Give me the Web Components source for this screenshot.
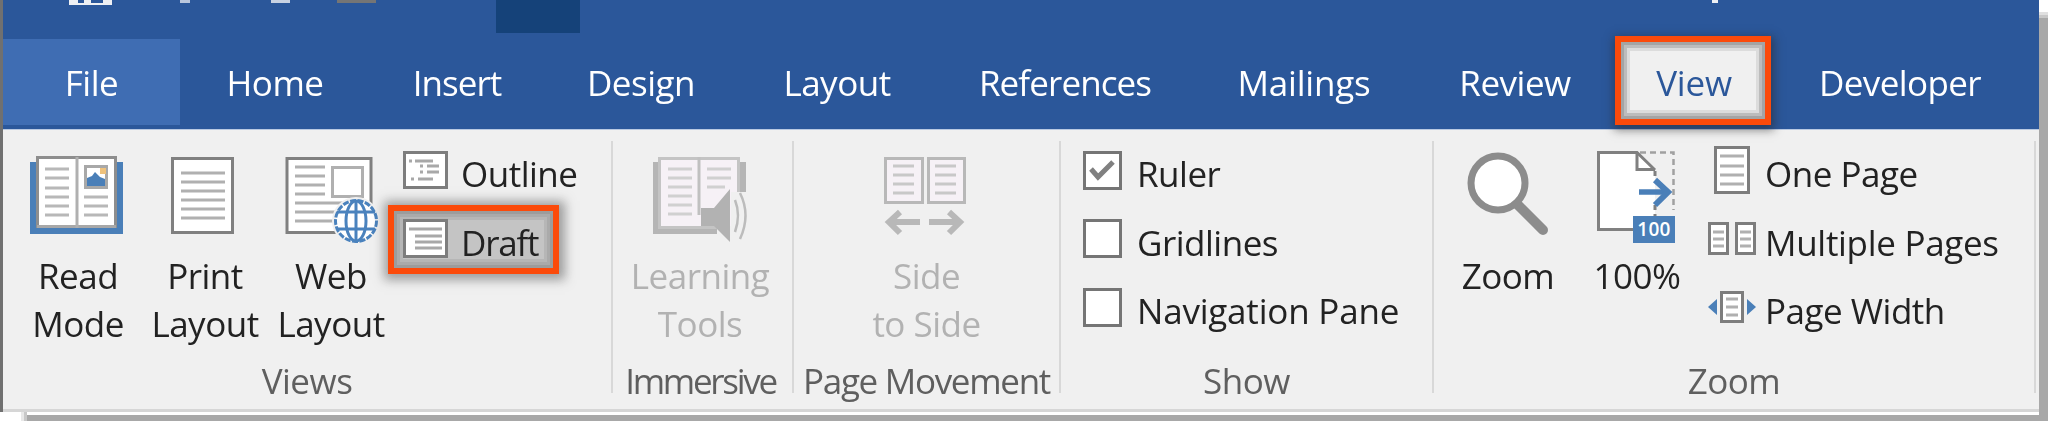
<!DOCTYPE html>
<html><head><meta charset="utf-8"><title>Word ribbon</title>
<style>
html,body{margin:0;padding:0;background:#a8a8a8}
body{font-family:"Open Sans","Liberation Sans",sans-serif;font-size:35px;letter-spacing:-.5px;width:2048px;height:421px;overflow:hidden}
</style></head><body>
<word-page>
  <title-strip></title-strip>
  <tab-row>
    <ribbon-tab file style="width:177px">File</ribbon-tab>
    <ribbon-tab style="width:190px">Home</ribbon-tab>
    <ribbon-tab style="width:174px;letter-spacing:-1px">Insert</ribbon-tab>
    <ribbon-tab style="width:194px">Design</ribbon-tab>
    <ribbon-tab style="width:198px">Layout</ribbon-tab>
    <ribbon-tab style="width:258px;letter-spacing:-.9px">References</ribbon-tab>
    <ribbon-tab style="width:220px;letter-spacing:-.2px">Mailings</ribbon-tab>
    <ribbon-tab style="width:202px">Review</ribbon-tab>
    <ribbon-tab marked style="width:156px;letter-spacing:-.2px">View</ribbon-tab>
    <ribbon-tab style="width:256px;letter-spacing:-.6px">Developer</ribbon-tab>
  </tab-row>
  <ribbon-body>
    <ribbon-group label="Views" style="width:610px;--pad:5px">
      <big-button style="width:140px"><svg slot="icon" width="140" height="109" viewBox="8 141 140 109">
        <rect x="30" y="162" width="93" height="72" fill="#4a7fb8"/>
        <rect x="37.5" y="157.5" width="78" height="69" fill="#fff" stroke="#8e8e8e" stroke-width="3"/>
        <path d="M37 226.5H116" stroke="#a8a8a8" stroke-width="3"/>
        <path d="M77 157V228" stroke="#b0b0b0" stroke-width="3"/>
        <path d="M45 169H69M45 178H69M45 188H69M45 197H69M45 206H69M45 215H69M84 197H108M84 206H108M84 215H108" stroke="#b8b8b8" stroke-width="3"/>
        <rect x="85.5" y="166.5" width="21" height="21" fill="#fff" stroke="#a8a8a8" stroke-width="3"/>
        <path d="M87 186V178L92 176L95 172L100 177L105 179V186Z" fill="#4a7fb8"/>
        <rect x="100" y="168" width="6" height="6" fill="#efc27c"/>
      </svg>Read<br>Mode</big-button>
      <big-button style="width:114px"><svg slot="icon" width="114" height="109" viewBox="148 141 114 109">
        <rect x="172.5" y="158.5" width="60" height="74" fill="#fff" stroke="#808080" stroke-width="3"/>
        <path d="M181 173H225M181 182H225M181 191H225M181 200H225M181 209H225M181 218H225" stroke="#b0b0b0" stroke-width="3"/>
      </svg>Print<br>Layout</big-button>
      <big-button style="width:138px"><svg slot="icon" width="138" height="109" viewBox="262 141 138 109">
        <rect x="287" y="158.5" width="84" height="74" fill="#fff" stroke="#808080" stroke-width="3"/>
        <path d="M295 167H325M295 176H325M295 185H325M295 194H325M295 203H345M295 212H345M295 221H345" stroke="#b0b0b0" stroke-width="3"/>
        <rect x="332.5" y="167.5" width="30" height="29" fill="#fff" stroke="#b0b0b0" stroke-width="3"/>
        <circle cx="356" cy="221" r="24" fill="#f0f0f0"/>
        <circle cx="356" cy="221" r="20.5" fill="#fff" stroke="#4a82bd" stroke-width="3" stroke-dasharray="6 1.5"/>
        <ellipse cx="356" cy="221" rx="10" ry="20" fill="none" stroke="#4a82bd" stroke-width="3"/>
        <path d="M337 212H375M337 229H375M356 201V241" stroke="#4a82bd" stroke-width="3"/>
      </svg>Web<br>Layout</big-button>
      <small-column style="margin-left:3px">
        <small-row style="--gap:13px"><svg slot="icon" width="45" height="38" viewBox="403 151 45 38">
          <rect x="404.5" y="152.5" width="42" height="35" fill="#fff" stroke="#7d7d7d" stroke-width="3"/>
          <path d="M409 161H412M415 161H433M420 166H423M427 166H439M420 172H423M427 172H439M411 179H414M418 179H433" stroke="#a8a8a8" stroke-width="3"/>
        </svg>Outline</small-row>
        <small-row marked style="--gap:13px;letter-spacing:-1.2px"><svg slot="icon" width="45" height="39" viewBox="403 219 45 39">
          <rect x="404.5" y="220.5" width="42" height="36" fill="#fff" stroke="#7d7d7d" stroke-width="3"/>
          <path d="M409 229H442M415 236H442M415 242H442M415 248H442" stroke="#a8a8a8" stroke-width="3"/>
        </svg>Draft</small-row>
      </small-column>
    </ribbon-group>

    <ribbon-group label="Immersive" style="width:181px;--label-right:4px;--ls:-2.3px">
      <big-button off style="width:174px"><svg slot="icon" width="174" height="109" viewBox="613 141 174 109">
        <path d="M653 162H746V196L735 190L717 234H653Z" fill="#b5b5b5"/>
        <rect x="659.5" y="158.5" width="79" height="69" fill="#f6f1f6" stroke="#c4c4c4" stroke-width="3"/>
        <path d="M699 157V215" stroke="#c0c0c0" stroke-width="3"/>
        <path d="M668 169H692M668 178H692M668 187H692M668 196H692M668 205H692M668 214H692M707 169H731M707 178H731M707 187H725" stroke="#d0d0d0" stroke-width="3"/>
        <path d="M725 226H748V246H717V226Z" fill="#f0f0f0"/>
        <path d="M731 192H750V246H731Z" fill="#f0f0f0"/>
        <path d="M701 208H714L730 189V242L714 226H701Z" fill="#b2b2b2"/>
        <path d="M735 200Q741 215 735 232M740 193Q751 215 740 239" fill="none" stroke="#bcbcbc" stroke-width="2.5"/>
      </svg>Learning<br>Tools</big-button>
    </ribbon-group>

    <ribbon-group label="Page Movement" style="width:267px;--ls:-1.3px">
      <big-button off style="width:265px"><svg slot="icon" width="265" height="109" viewBox="794 141 265 109">
        <rect x="885.5" y="158.5" width="37" height="44" fill="#f6f1f6" stroke="#b8b8b8" stroke-width="3"/>
        <rect x="928.5" y="158.5" width="36" height="44" fill="#f6f1f6" stroke="#b8b8b8" stroke-width="3"/>
        <path d="M893 166H914M893 175H914M893 184H914M893 193H914M935 166H956M935 175H956M935 184H956M935 193H956" stroke="#c8c8c8" stroke-width="3"/>
        <path d="M920 222H890M900 212L889 222L900 233M929 222H959M949 212L960 222L949 233" fill="none" stroke="#b8b8b8" stroke-width="6"/>
      </svg>Side<br>to Side</big-button>
    </ribbon-group>

    <ribbon-group label="Show" style="width:373px;--pad:22px">
      <small-column>
        <small-row style="--gap:15px"><check-box checked slot="icon"></check-box>Ruler</small-row>
        <small-row style="--gap:15px"><check-box slot="icon"></check-box>Gridlines</small-row>
        <small-row style="--gap:15px;letter-spacing:-.2px"><check-box slot="icon"></check-box>Navigation Pane</small-row>
      </small-column>
    </ribbon-group>

    <ribbon-group label="Zoom" style="width:602px">
      <big-button style="width:148px"><svg slot="icon" width="148" height="109" viewBox="1434 141 148 109">
        <path d="M1518 205L1543 230" stroke="#8c8c8c" stroke-width="10" stroke-linecap="round"/>
        <circle cx="1498" cy="183" r="27" fill="#fff" stroke="#8c8c8c" stroke-width="7"/>
      </svg>Zoom</big-button>
      <big-button style="width:110px"><span slot="icon" style="display:block;position:relative;width:110px;height:109px">
        <svg width="110" height="109" viewBox="1582 141 110 109" style="display:block">
          <path d="M1598.5 152.5H1637L1655 170V216H1633V229.5H1598.5Z" fill="#fff"/>
          <path d="M1637 152.5V169.5H1655" fill="none" stroke="#808080" stroke-width="3"/>
          <path d="M1655 171V178M1655 205V216" fill="none" stroke="#808080" stroke-width="3" stroke-dasharray="5 4"/>
          <path d="M1633 229.5H1598.5V152.5H1637L1655 170" fill="none" stroke="#808080" stroke-width="3"/>
          <path d="M1640 152.5H1673.5V210" fill="none" stroke="#a0a0a0" stroke-width="2.5" stroke-dasharray="6 4"/>
          <path d="M1639 192H1668" stroke="#4a7fb8" stroke-width="5.5"/>
          <path d="M1655 180L1668 192L1655 205" fill="none" stroke="#4a7fb8" stroke-width="6"/>
          <rect x="1633" y="216" width="42" height="27" fill="#4a7fb8"/>
        </svg>
        <b style="position:absolute;left:51px;top:75px;width:42px;height:27px;line-height:27px;text-align:center;font-size:19px;font-weight:600;color:#fff;letter-spacing:.3px">100</b>
      </span>100%</big-button>
      <small-column style="margin-left:16px">
        <small-row style="--gap:9px"><svg slot="icon" width="48" height="48" viewBox="1708 147 48 48">
          <rect x="1715.5" y="148.5" width="33" height="45" fill="#fff" stroke="#7d7d7d" stroke-width="3"/>
          <path d="M1720 157H1744M1720 167H1744M1720 176H1744M1720 185H1744" stroke="#b0b0b0" stroke-width="3"/>
        </svg>One Page</small-row>
        <small-row style="--gap:9px;letter-spacing:-.3px"><svg slot="icon" width="48" height="33" viewBox="1708 223 48 33">
          <rect x="1709.5" y="224.5" width="18" height="30" fill="#fff" stroke="#7d7d7d" stroke-width="3"/>
          <rect x="1736.5" y="224.5" width="18" height="30" fill="#fff" stroke="#7d7d7d" stroke-width="3"/>
          <path d="M1713 233H1724M1713 240H1724M1713 247H1724M1740 233H1751M1740 240H1751M1740 247H1751" stroke="#b0b0b0" stroke-width="3"/>
        </svg>Multiple Pages</small-row>
        <small-row style="--gap:9px"><svg slot="icon" width="48" height="32" viewBox="1708 292 48 32">
          <rect x="1721.5" y="293.5" width="21" height="29" fill="#fff" stroke="#7d7d7d" stroke-width="3"/>
          <path d="M1726 300H1738M1726 308H1738M1726 316H1738" stroke="#b0b0b0" stroke-width="3"/>
          <path d="M1708 308L1717 300V316ZM1756 308L1747 300V316Z" fill="#4a7fb8"/>
        </svg>Page Width</small-row>
      </small-column>
    </ribbon-group>
  </ribbon-body>
</word-page>

<script>
function def(name, css, html, setup){
  customElements.define(name, class extends HTMLElement{
    constructor(){super();const r=this.attachShadow({mode:'open'});
      r.innerHTML='<style>'+css+'</style>'+(typeof html==='function'?html(this):html);}
    connectedCallback(){ if(setup) setup(this); }
  });
}
const bevel=(a,b,c)=>`inset 0 0 0 3px ${a},inset 0 0 0 6px ${b},inset 0 0 0 9px ${c}`;

def('word-page',`
  :host{display:grid;grid-template-columns:2039px 9px;grid-template-rows:412px 9px;width:2048px;height:421px;background:#a8a8a8}
  .win{box-sizing:border-box;border-left:3px solid #707070;background:#2b579a;height:412px;display:flex;flex-direction:column;overflow:visible}
  .edge-r{display:flex;flex-direction:column}
  .edge-r i{display:block}
  .edge-b{grid-column:1/3;display:flex}
  .edge-b i{display:block;height:9px}
`,`<div class="win"><slot></slot></div>
  <div class="edge-r"><i style="height:12px;background:#fff"></i><i style="height:3px;background:#e0e0e0"></i><i style="height:3px;background:#c8c8c8"></i></div>
  <div class="edge-b"><i style="width:21px;background:#fff"></i><i style="width:3px;background:#e8e8e8"></i><i style="width:3px;background:#c8c8c8"></i></div>`);

def('title-strip',`
  :host{display:flex;height:39px;flex:none;background:#2b579a;align-items:flex-start}
  i{display:block;height:3px;background:#eef0f4;flex:none}
  .qa{display:flex;margin-left:66px;width:43px;height:5px;background:#eef0f4;position:relative}
  .qa b{display:block;height:3px;background:#2b579a;position:absolute;top:0}
`,`<div class="qa"><b style="left:9px;width:6px"></b><b style="left:22px;width:12px"></b></div>
  <i style="margin-left:68px;width:10px;background:#b9c6dc"></i>
  <i style="margin-left:81px;width:19px;background:#c8d2e2"></i>
  <i style="margin-left:47px;width:39px;background:#757575"></i>
  <i style="margin-left:120px;width:84px;height:33px;background:#154279"></i>
  <i style="margin-left:1132px;width:6px;background:#eef0f4"></i>`);

def('tab-row',`
  :host{display:flex;flex:none;height:91px;box-sizing:border-box;padding-bottom:4px;background:#2b579a;border-bottom:1px solid #b9c9e2}
`,`<slot></slot>`);

def('ribbon-tab',`
  :host{display:flex;align-items:center;justify-content:center;position:relative;z-index:0;color:#fff;flex:none;white-space:nowrap}
  :host([file]){background:#3f6db3}
  :host([marked]){color:#2b579a;z-index:2}
  :host([marked])::before{content:"";position:absolute;z-index:-1;left:-1px;right:1px;top:-3px;bottom:0;box-sizing:border-box;
    border:6px solid #fb4a0a;background:#f0f0f0;
    box-shadow:${bevel('#a4a4a4','#bcbcbc','#dcdcdc')},1px 3px 9px 2px rgba(40,40,40,.55)}
  span{filter:blur(.4px)}
`,`<span><slot></slot></span>`);

def('ribbon-body',`
  :host{display:flex;flex:1;background:#f0f0f0;border-bottom:3px solid #d6d6d6;box-shadow:0 3px 0 #fff;align-items:flex-start;color:#222;min-height:0}
`,`<slot></slot>`);

def('ribbon-group',`
  :host{display:flex;flex-direction:column;flex:none;box-sizing:border-box;height:252px;margin-top:11px;border-right:2px solid #d8d8d8}
  .c{display:flex;flex:none;height:215px;padding-left:var(--pad,0);align-items:flex-start}
  .l{flex:none;height:37px;line-height:50px;text-align:center;color:#5f5f5f;white-space:nowrap;padding-right:var(--label-right,0);letter-spacing:var(--ls,-.5px);filter:blur(.4px)}
`,el=>`<div class="c"><slot></slot></div><div class="l">${el.getAttribute('label')}</div>`);

def('big-button',`
  :host{display:block;flex:none;text-align:center;line-height:48px;white-space:nowrap}
  :host([off]){color:#b2b2b2}
  .i{display:block;height:110.5px;line-height:0;overflow:visible}
  .t{display:block;filter:blur(.4px)}
  ::slotted(svg){display:block;overflow:visible}
`,`<div class="i"><slot name="icon"></slot></div><div class="t"><slot></slot></div>`);

def('small-column',`
  :host{display:flex;flex-direction:column;flex:none;gap:30px;padding-top:10px}
`,`<slot></slot>`);

def('small-row',`
  :host{display:flex;align-items:center;height:38.5px;gap:var(--gap,14px);position:relative;z-index:0;white-space:nowrap}
  :host([marked])::before{content:"";position:absolute;z-index:-1;left:-15px;top:-14.5px;width:171px;height:69px;box-sizing:border-box;
    border:6px solid #fb4a0a;background:#c4c4c4;
    box-shadow:${bevel('#9c9c9c','#aaaaaa','#b6b6b6')},1px 1px 10px 5px rgba(90,90,90,.55)}
  .t{line-height:38px;padding-top:8px;filter:blur(.4px)}
  ::slotted(svg){display:block;flex:none;overflow:visible}
`,`<slot name="icon"></slot><span class="t"><slot></slot></span>`);

def('check-box',`
  :host{display:block;flex:none;width:39px;height:39px;box-sizing:border-box;background:#fff;border:3px solid #757575}
  svg{display:block;filter:blur(.3px)}
`,el=>el.hasAttribute('checked')?`<svg width="33" height="33" viewBox="0 0 33 33"><path d="M5 15L12 23L27 8" fill="none" stroke="#808080" stroke-width="5"/></svg>`:'');
</script>
</body></html>
